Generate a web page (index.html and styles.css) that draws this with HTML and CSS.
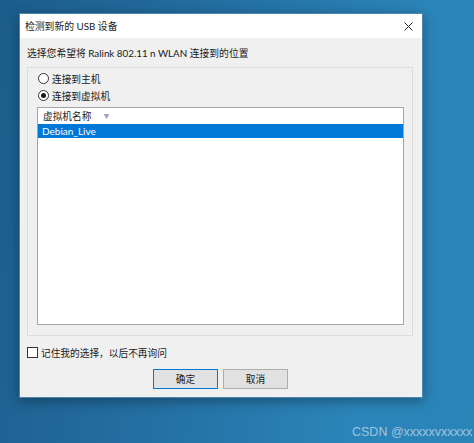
FILE: index.html
```html
<!DOCTYPE html>
<html lang="zh-CN">
<head>
  <meta charset="UTF-8" />
  <title>检测到新的 USB 设备</title>
  <link rel="stylesheet" href="styles.css">
</head>
<body>

  <div class="dialog">
    <div class="titlebar">
      <span class="title">检测到新的 USB 设备</span>
      <svg class="close" width="9" height="9" viewBox="0 0 9 9">
        <path d="M0.5 0.5 L8.5 8.5 M8.5 0.5 L0.5 8.5" stroke="#2b2b2b" stroke-width="1" fill="none"/>
      </svg>
    </div>

    <div class="content">
      <p class="prompt">选择您希望将 Ralink 802.11 n WLAN 连接到的位置</p>

      <div class="group">
        <label class="radio"><span class="dot"></span>连接到主机</label>
        <label class="radio checked"><span class="dot"></span>连接到虚拟机</label>

        <div class="listbox">
          <div class="list-head">虚拟机名称<span class="sort">&#9660;</span></div>
          <div class="list-row selected">Debian_Live</div>
        </div>
      </div>

      <label class="check"><span class="box"></span>记住我的选择，以后不再询问</label>

      <div class="buttons">
        <button class="btn default">确定</button>
        <button class="btn">取消</button>
      </div>
    </div>
  </div>

  <div class="watermark">CSDN @xxxxxvxxxxx</div>

</body>
</html>
```

FILE: styles.css
```css
* {
  margin: 0;
  padding: 0;
  box-sizing: border-box;
  font-family: Lato, "Noto Sans CJK SC", sans-serif;
}
body {
  width: 474px;
  height: 443px;
  overflow: hidden;
  background: linear-gradient(100deg, #1c5d8c 0%, #246fa2 40%, #2b85ba 78%, #2b84b8 100%);
  padding: 13px 0 0 19px;
  position: relative;
}
.dialog {
  width: 404px;
  height: 385px;
  background-color: #f0f0f0;
  border: 1px solid #4f86ad;
  box-shadow: 0 3px 12px rgba(0, 0, 0, 0.35);
  display: flex;
  flex-direction: column;
}
.titlebar {
  height: 24px;
  background-color: white;
  display: flex;
  align-items: center;
  justify-content: space-between;
  padding: 0 9px 0 5px;
}
.title {
  font-size: 9.8px;
  line-height: 14px;
  color: #1a1a1a;
}
.content {
  display: flex;
  flex-direction: column;
  padding: 8px 9px 0 7px;
}
.prompt {
  font-size: 9.8px;
  color: #1a1a1a;
  line-height: 14px;
}
.group {
  margin-top: 7px;
  height: 269px;
  border: 1px solid #dcdcdc;
  padding: 2px 8px 0 9px;
  display: flex;
  flex-direction: column;
}
.radio, .check {
  display: flex;
  align-items: center;
  font-size: 9.7px;
  line-height: 14px;
  color: #1a1a1a;
  height: 17px;
}
.dot {
  width: 11px;
  height: 11px;
  border: 1px solid #333;
  border-radius: 50%;
  background-color: white;
  margin: 0 3px 0 1px;
  display: flex;
  align-items: center;
  justify-content: center;
}
.checked .dot::after {
  content: "";
  width: 5px;
  height: 5px;
  border-radius: 50%;
  background-color: #1a1a1a;
}
.listbox {
  margin-top: 3px;
  height: 218px;
  background-color: white;
  border: 1px solid #a5a5a5;
}
.list-head {
  height: 16px;
  font-size: 9.7px;
  color: #1a1a1a;
  line-height: 16px;
  padding-left: 5px;
  display: flex;
  align-items: center;
}
.sort {
  color: #a79fc0;
  font-size: 6px;
  line-height: 6px;
  margin-left: 12px;
}
.list-row {
  height: 14px;
  font-size: 10px;
  line-height: 14px;
  padding-left: 4px;
}
.selected {
  background-color: #0078d7;
  color: white;
}
.check {
  margin-top: 8px;
}
.box {
  width: 11px;
  height: 11px;
  border: 1px solid #333;
  background-color: white;
  margin-right: 3px;
}
.buttons {
  margin-top: 8px;
  display: flex;
  gap: 5px;
  padding-left: 126px;
}
.btn {
  width: 65px;
  height: 20px;
  font-size: 9.7px;
  line-height: 14px;
  color: #1a1a1a;
  background-color: #e1e1e1;
  border: 1px solid #adadad;
}
.btn.default {
  border: 1px solid #0078d7;
}
.watermark {
  position: absolute;
  left: 352px;
  top: 425px;
  font-family: "Liberation Sans", Arial, sans-serif;
  font-size: 12.5px;
  line-height: 14px;
  color: rgba(235, 240, 245, 0.6);
}
```
